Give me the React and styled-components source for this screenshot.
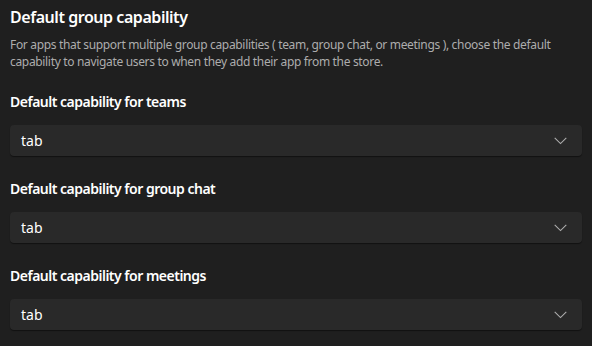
import React from "react";
import styled, { createGlobalStyle } from "styled-components";

const Global = createGlobalStyle`
  html, body { margin: 0; padding: 0; background: #1f1f1f; }
  body { font-family: "Segoe UI", "Noto Sans", "Open Sans", sans-serif; color: #fff; }
`;

const Page = styled.div`
  width: 592px;
  height: 346px;
  box-sizing: border-box;
  padding: 6px 10px 0 10px;
  background: #1f1f1f;
  display: flex;
  flex-direction: column;
  overflow: hidden;
`;

const Title = styled.h2`
  margin: 0;
  font-size: 16px;
  font-weight: 600;
  line-height: 22px;
  color: #ffffff;
  letter-spacing: -0.45px;
`;

const Description = styled.p`
  margin: 8px 0 0 0;
  font-size: 12px;
  line-height: 17px;
  color: #adadad;
  letter-spacing: -0.33px;
`;

const Field = styled.div`
  display: flex;
  flex-direction: column;
  margin-top: ${(p) => (p.$first ? "22px" : "23px")};
`;

const Label = styled.label`
  font-size: 14px;
  font-weight: 600;
  line-height: 20px;
  color: #ffffff;
  letter-spacing: -0.5px;
`;

const Select = styled.div`
  margin-top: 13px;
  height: 31px;
  box-sizing: border-box;
  background: #292929;
  border-radius: 4px;
  box-shadow: 0 1px 1px rgba(0, 0, 0, 0.45);
  display: flex;
  align-items: center;
  justify-content: space-between;
  padding: 0 15px 0 11px;
  font-size: 14px;
  color: #ffffff;
`;

const Chevron = () => (
  <svg width="13" height="8" viewBox="0 0 13 8" fill="none">
    <path d="M0.7 0.9 L6.5 6.6 L12.3 0.9" stroke="#adadad" strokeWidth="1.1" />
  </svg>
);

const fields = [
  "Default capability for teams",
  "Default capability for group chat",
  "Default capability for meetings",
];

export default function App() {
  return (
    <>
      <Global />
      <Page>
        <Title>Default group capability</Title>
        <Description>
          For apps that support multiple group capabilities ( team, group chat, or meetings ), choose the default
          capability to navigate users to when they add their app from the store.
        </Description>
        {fields.map((f, i) => (
          <Field key={f} $first={i === 0}>
            <Label>{f}</Label>
            <Select>
              <span>tab</span>
              <Chevron />
            </Select>
          </Field>
        ))}
      </Page>
    </>
  );
}
